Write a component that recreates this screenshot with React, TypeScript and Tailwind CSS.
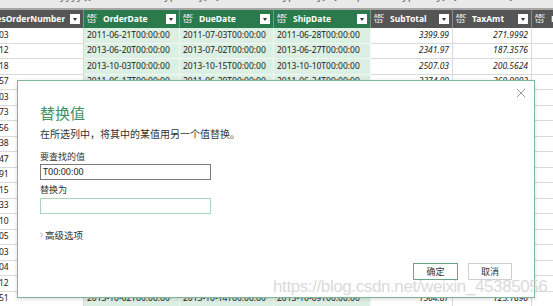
import React from "react";

const font = "font-['Segoe_UI','Noto_Sans','Noto_Sans_CJK_SC',sans-serif]";
const cjk = "font-['Noto_Sans_CJK_SC','Noto_Sans',sans-serif]";

const formula = 'yyyy{{"OrderDate", type any}, {"DueDate", type any}, {"ShipDate", type any}, {"SubTotal"}';

const rows = [
  ["SO43703", "2011-06-21T00:00:00", "2011-07-03T00:00:00", "2011-06-28T00:00:00", "3399.99", "271.9992"],
  ["SO50712", "2013-06-20T00:00:00", "2013-07-02T00:00:00", "2013-06-27T00:00:00", "2341.97", "187.3576"],
  ["SO57418", "2013-10-03T00:00:00", "2013-10-15T00:00:00", "2013-10-10T00:00:00", "2507.03", "200.5624"],
  ["SO43657", "2011-06-17T00:00:00", "2011-06-29T00:00:00", "2011-06-24T00:00:00", "3374.99", "269.9992"],
  ["SO44103", "2011-08-01T00:00:00", "2011-08-13T00:00:00", "2011-08-08T00:00:00", "3578.27", "286.2616"],
  ["SO44573", "2011-09-02T00:00:00", "2011-09-14T00:00:00", "2011-09-09T00:00:00", "3374.99", "269.9992"],
  ["SO45056", "2011-10-04T00:00:00", "2011-10-16T00:00:00", "2011-10-11T00:00:00", "3399.99", "271.9992"],
  ["SO45838", "2011-11-20T00:00:00", "2011-12-02T00:00:00", "2011-11-27T00:00:00", "3578.27", "286.2616"],
  ["SO46347", "2011-12-28T00:00:00", "2012-01-09T00:00:00", "2012-01-04T00:00:00", "3374.99", "269.9992"],
  ["SO47091", "2012-02-14T00:00:00", "2012-02-26T00:00:00", "2012-02-21T00:00:00", "3399.99", "271.9992"],
  ["SO48115", "2012-04-20T00:00:00", "2012-05-02T00:00:00", "2012-04-27T00:00:00", "2319.99", "185.5992"],
  ["SO49133", "2012-06-19T00:00:00", "2012-07-01T00:00:00", "2012-06-26T00:00:00", "2443.35", "195.468"],
  ["SO50210", "2012-08-11T00:00:00", "2012-08-23T00:00:00", "2012-08-18T00:00:00", "2181.56", "174.5248"],
  ["SO51205", "2012-10-09T00:00:00", "2012-10-21T00:00:00", "2012-10-16T00:00:00", "2341.97", "187.3576"],
  ["SO52503", "2012-12-05T00:00:00", "2012-12-17T00:00:00", "2012-12-12T00:00:00", "2443.35", "195.468"],
  ["SO53804", "2013-02-18T00:00:00", "2013-03-02T00:00:00", "2013-02-25T00:00:00", "2341.97", "187.3576"],
  ["SO55412", "2013-06-12T00:00:00", "2013-06-24T00:00:00", "2013-06-19T00:00:00", "2181.56", "174.5248"],
  ["SO57251", "2013-10-02T00:00:00", "2013-10-14T00:00:00", "2013-10-09T00:00:00", "1564.87", "125.1896"],
];

const cols = [
  { name: "SalesOrderNumber", w: "w-[119px]", sel: false, num: false },
  { name: "OrderDate", w: "w-[96px]", sel: true, num: false },
  { name: "DueDate", w: "w-[94px]", sel: true, num: false },
  { name: "ShipDate", w: "w-[97px]", sel: true, num: false },
  { name: "SubTotal", w: "w-[82px]", sel: false, num: true },
  { name: "TaxAmt", w: "w-[79px]", sel: false, num: true },
  { name: "Freight", w: "w-[70px]", sel: false, num: true },
];

function TypeIcon() {
  return (
    <div className="flex w-[12px] shrink-0 flex-col text-[5px] font-bold leading-[5px] text-[#e6e6e6]">
      <span>ABC</span>
      <span>123</span>
    </div>
  );
}

function Dropdown() {
  return (
    <div className="ml-auto flex h-[10px] w-[10px] shrink-0 items-center justify-center bg-white">
      <div className="h-0 w-0 border-x-[2.5px] border-t-[3px] border-x-transparent border-t-[#333]" />
    </div>
  );
}

export default function App() {
  return (
    <div className={`relative h-[306px] w-[553px] overflow-hidden bg-white ${font}`}>
      {/* formula bar remnant */}
      <div className="h-[8px] overflow-hidden bg-[#e9e9e9]">
        <div className="-mt-[12px] whitespace-nowrap pl-[60px] text-[11px] leading-[14px] text-[#666]">{formula}</div>
      </div>
      <div className="h-[2px] bg-[#a6a6a6]" />

      <div className="-ml-[35px]">
        <div className="flex h-[18px]">
          {cols.map((c) => (
            <div
              key={c.name}
              className={`flex ${c.w} shrink-0 items-center gap-[4px] border-r border-[#8c8c8c] pl-[3px] pr-[3px] ${
                c.sel ? "bg-[#2b7a4d]" : "bg-[#555555]"
              }`}
            >
              <TypeIcon />
              <span className="overflow-hidden whitespace-nowrap text-[8.5px] font-bold text-white">{c.name}</span>
              <Dropdown />
            </div>
          ))}
        </div>
        {rows.map((r, i) => (
          <div key={i} className="flex h-[15.5px]">
            {cols.map((c, j) => (
              <div
                key={c.name}
                className={`flex ${c.w} shrink-0 items-center border-b border-r text-[8.5px] text-[#222] ${
                  c.sel ? "border-[#f2f9f4] bg-[#dcefe3]" : "border-[#dadada] bg-white"
                } ${c.num ? "justify-end px-[3px] italic" : j === 0 ? "pl-[8px]" : "px-[3px]"}`}
              >
                {j === 6 ? "" : r[j]}
              </div>
            ))}
          </div>
        ))}
      </div>

      {/* dialog */}
      <div className="absolute left-[17px] top-[80px] flex h-[218px] w-[518px] flex-col border border-[#7fb697] bg-white pl-[22px] pr-[22px] shadow-[0_1px_4px_rgba(0,0,0,0.15)]">
        <svg className="absolute right-[8px] top-[7px]" width="10" height="10" viewBox="0 0 10 10">
          <path d="M1 1 L9 9 M9 1 L1 9" stroke="#8a8a8a" strokeWidth="0.9" fill="none" />
        </svg>
        <div className={`mt-[22px] text-[15px] leading-[20px] text-[#44905f] ${cjk}`}>替换值</div>
        <div className={`mt-[5px] text-[10px] leading-[12px] text-[#333] ${cjk}`}>
          在所选列中，将其中的某值用另一个值替换。
        </div>
        <div className={`mt-[11px] text-[9px] leading-[12px] text-[#333] ${cjk}`}>要查找的值</div>
        <div className="mt-[1px] flex h-[16px] w-[171px] items-center border border-[#7a7a7a] px-[2px] text-[9px] text-[#222]">
          T00:00:00
        </div>
        <div className={`mt-[4px] text-[9px] leading-[12px] text-[#333] ${cjk}`}>替换为</div>
        <div className="mt-[2px] h-[16px] w-[171px] border border-[#a9d6b9]" />
        <div className={`mt-[15px] flex items-center gap-[2px] text-[9.5px] leading-[12px] text-[#333] ${cjk}`}>
          <svg width="3" height="6" viewBox="0 0 3 6">
            <path d="M0.4 0.6 L2.6 3 L0.4 5.4" stroke="#888" strokeWidth="0.7" fill="none" />
          </svg>
          <span>高级选项</span>
        </div>
        <div className="mb-[17px] mt-auto flex justify-end gap-[10px]">
          <button
            className={`flex h-[17px] w-[45px] items-center justify-center border-[1.5px] border-[#6aa584] bg-white text-[9px] text-[#333] ${cjk}`}
          >
            确定
          </button>
          <button
            className={`flex h-[17px] w-[44px] items-center justify-center border border-[#cfcfcf] bg-white text-[9px] text-[#333] ${cjk}`}
          >
            取消
          </button>
        </div>
      </div>

      {/* watermark */}
      <div className="pointer-events-none absolute left-[273px] top-[275px] whitespace-nowrap font-['Liberation_Sans',sans-serif] text-[17px] leading-[24px] tracking-[-0.4px] text-[#d0d0d0]/80">
        https://blog.csdn.net/weixin_45385056
      </div>
    </div>
  );
}
